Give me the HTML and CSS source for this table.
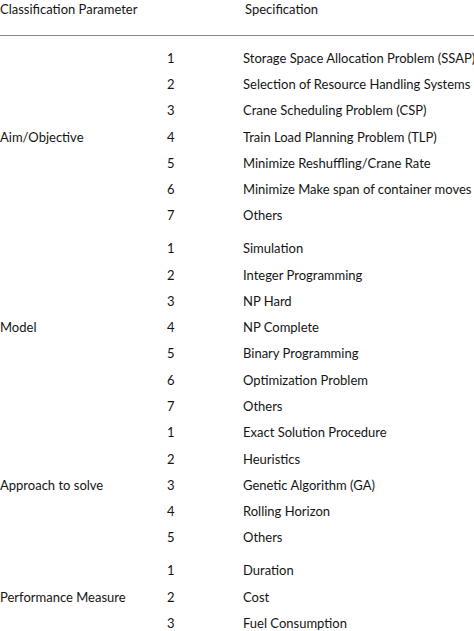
FILE: index.html
```html
<!DOCTYPE html>
<html lang="en">
<head>
<meta charset="utf-8">
<title>Classification</title>
<link rel="stylesheet" href="styles.css">
</head>
<body>
<div class="table">
  <div class="head">
    <div class="head-param">Classification Parameter</div>
    <div class="head-spec">Specification</div>
  </div>
  <div class="body">
    <div class="group">
      <div class="group-label">Aim/Objective</div>
      <div class="items">
        <div class="item"><span class="num">1</span><span class="spec">Storage Space Allocation Problem (SSAP)</span></div>
        <div class="item"><span class="num">2</span><span class="spec">Selection of Resource Handling Systems</span></div>
        <div class="item"><span class="num">3</span><span class="spec">Crane Scheduling Problem (CSP)</span></div>
        <div class="item"><span class="num">4</span><span class="spec">Train Load Planning Problem (TLP)</span></div>
        <div class="item"><span class="num">5</span><span class="spec">Minimize Reshuffling/Crane Rate</span></div>
        <div class="item"><span class="num">6</span><span class="spec">Minimize Make span of container moves</span></div>
        <div class="item"><span class="num">7</span><span class="spec">Others</span></div>
      </div>
    </div>
    <div class="group spaced">
      <div class="group-label">Model</div>
      <div class="items">
        <div class="item"><span class="num">1</span><span class="spec">Simulation</span></div>
        <div class="item"><span class="num">2</span><span class="spec">Integer Programming</span></div>
        <div class="item"><span class="num">3</span><span class="spec">NP Hard</span></div>
        <div class="item"><span class="num">4</span><span class="spec">NP Complete</span></div>
        <div class="item"><span class="num">5</span><span class="spec">Binary Programming</span></div>
        <div class="item"><span class="num">6</span><span class="spec">Optimization Problem</span></div>
        <div class="item"><span class="num">7</span><span class="spec">Others</span></div>
      </div>
    </div>
    <div class="group">
      <div class="group-label">Approach to solve</div>
      <div class="items">
        <div class="item"><span class="num">1</span><span class="spec">Exact Solution Procedure</span></div>
        <div class="item"><span class="num">2</span><span class="spec">Heuristics</span></div>
        <div class="item"><span class="num">3</span><span class="spec">Genetic Algorithm (GA)</span></div>
        <div class="item"><span class="num">4</span><span class="spec">Rolling Horizon</span></div>
        <div class="item"><span class="num">5</span><span class="spec">Others</span></div>
      </div>
    </div>
    <div class="group spaced">
      <div class="group-label">Performance Measure</div>
      <div class="items">
        <div class="item"><span class="num">1</span><span class="spec">Duration</span></div>
        <div class="item"><span class="num">2</span><span class="spec">Cost</span></div>
        <div class="item"><span class="num">3</span><span class="spec">Fuel Consumption</span></div>
      </div>
    </div>
  </div>
</div>
</body>
</html>
```
FILE: styles.css
```css
html, body {
  margin: 0;
  padding: 0;
  background: #ffffff;
}

body {
  font-family: Lato, "Noto Sans", sans-serif;
  font-size: 13px;
  color: #141414;
  overflow: hidden;
}

.table {
  width: 474px;
}

.head {
  display: flex;
  height: 35px;
  border-bottom: 1.5px solid #888888;
  line-height: 18px;
}

.head-param {
  width: 245px;
}

.body {
  padding-top: 8.5px;
}

.group {
  display: flex;
}

.group.spaced {
  margin-top: 6.5px;
}

.group-label {
  width: 167px;
  flex-shrink: 0;
  display: flex;
  align-items: center;
}

.items {
  flex: 1;
}

.item {
  display: flex;
  align-items: center;
  height: 26.3px;
  white-space: nowrap;
}

.num {
  width: 76px;
  flex-shrink: 0;
}
```
